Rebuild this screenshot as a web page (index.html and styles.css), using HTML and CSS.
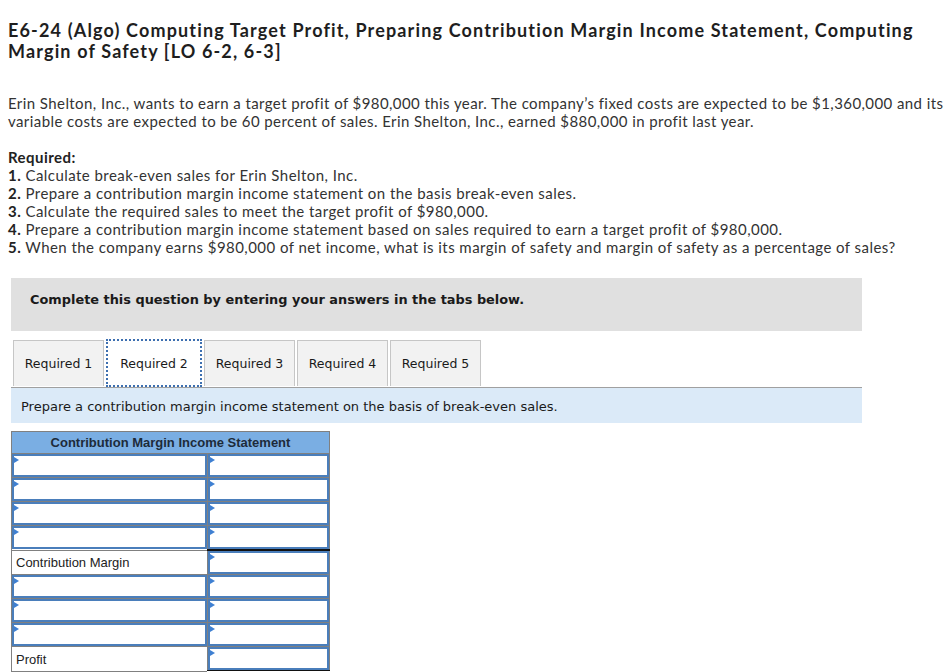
FILE: index.html
```html
<!DOCTYPE html>
<html>
<head>
<meta charset="utf-8">
<link rel="stylesheet" href="styles.css">
</head>
<body>
<div class="page">
  <h1 class="title">E6-24 (Algo) Computing Target Profit, Preparing Contribution Margin Income Statement, Computing Margin of Safety [LO 6-2, 6-3]</h1>
  <p class="intro">Erin Shelton, Inc., wants to earn a target profit of $980,000 this year. The company’s fixed costs are expected to be $1,360,000 and its variable costs are expected to be 60 percent of sales. Erin Shelton, Inc., earned $880,000 in profit last year.</p>
  <div class="req">
    <div class="req-head">Required:</div>
    <div><b>1.</b> Calculate break-even sales for Erin Shelton, Inc.</div>
    <div><b>2.</b> Prepare a contribution margin income statement on the basis break-even sales.</div>
    <div><b>3.</b> Calculate the required sales to meet the target profit of $980,000.</div>
    <div><b>4.</b> Prepare a contribution margin income statement based on sales required to earn a target profit of $980,000.</div>
    <div><b>5.</b> When the company earns $980,000 of net income, what is its margin of safety and margin of safety as a percentage of sales?</div>
  </div>

  <div class="work">
    <div class="banner">Complete this question by entering your answers in the tabs below.</div>
    <div class="tabs">
      <div class="tab">Required 1</div>
      <div class="tab active">Required 2</div>
      <div class="tab">Required 3</div>
      <div class="tab">Required 4</div>
      <div class="tab">Required 5</div>
    </div>
    <div class="instr">Prepare a contribution margin income statement on the basis of break-even sales.</div>

    <table class="cmis">
      <tr><th colspan="2">Contribution Margin Income Statement</th></tr>
      <tr><td class="c1"><div class="inp"></div></td><td class="c2"><div class="inp"></div></td></tr>
      <tr><td class="c1"><div class="inp"></div></td><td class="c2"><div class="inp"></div></td></tr>
      <tr><td class="c1"><div class="inp"></div></td><td class="c2"><div class="inp"></div></td></tr>
      <tr><td class="c1"><div class="inp"></div></td><td class="c2 single"><div class="inp"></div></td></tr>
      <tr><td class="c1 label">Contribution Margin</td><td class="c2"><div class="inp"></div></td></tr>
      <tr><td class="c1"><div class="inp"></div></td><td class="c2"><div class="inp"></div></td></tr>
      <tr><td class="c1"><div class="inp"></div></td><td class="c2"><div class="inp"></div></td></tr>
      <tr><td class="c1"><div class="inp"></div></td><td class="c2"><div class="inp"></div></td></tr>
      <tr><td class="c1 label">Profit</td><td class="c2 double"><div class="inp"></div></td></tr>
    </table>
  </div>
</div>
</body>
</html>
```
FILE: styles.css
```css
html, body {
  margin: 0;
  padding: 0;
  background: #fff;
}
.page {
  padding: 20px 0 0 8px;
  font-family: "Lato", "Liberation Sans", sans-serif;
  color: #333;
}
.title {
  margin: 0;
  font-size: 18px;
  line-height: 21px;
  font-weight: 700;
  letter-spacing: 1.15px;
  color: #1e1e1e;
  width: 935px;
}
.intro {
  margin: 32px 0 0;
  font-size: 15px;
  line-height: 18px;
  letter-spacing: 0.42px;
  width: 942px;
}
.req {
  margin-top: 18px;
  font-size: 15px;
  line-height: 18px;
  letter-spacing: 0.45px;
}
.req b, .req-head {
  font-weight: 700;
  color: #222;
}
.work {
  margin: 22px 0 0 3px;
  font-family: "DejaVu Sans", Verdana, sans-serif;
  color: #1a1a1a;
}
.banner {
  width: 851px;
  height: 53px;
  box-sizing: border-box;
  padding: 14px 19px 0;
  background: #e0e0e0;
  font-size: 12.9px;
  line-height: 16px;
  font-weight: 700;
}
.tabs {
  margin-top: 8px;
  width: 851px;
  display: flex;
  gap: 2px;
  padding-left: 2px;
  box-sizing: border-box;
  border-bottom: 1px solid #a0a0a0;
}
.tab {
  height: 45px;
  width: 89px;
  border: 1px solid #c6c6c6;
  border-bottom: none;
  background: #f2f2f2;
  display: flex;
  align-items: center;
  justify-content: center;
  font-size: 12.5px;
  margin-top: 1px;
}
.tab.active {
  background: #fff;
  border: 2px dotted #3d6fb0;
  height: 44px;
  width: 92px;
  margin-top: 0;
}
.instr {
  width: 851px;
  height: 35px;
  box-sizing: border-box;
  padding: 11px 10px 0;
  background: #dbeaf8;
  font-size: 13px;
  line-height: 16px;
}
.cmis {
  margin-top: 8px;
  border-collapse: collapse;
  width: 319px;
  font-family: "Liberation Sans", Arial, sans-serif;
}
.cmis th {
  height: 21px;
  padding: 0;
  background: #7aaee3;
  border: 1px solid #808080;
  font-size: 13px;
  font-weight: 700;
  color: #1d2b3a;
  text-align: center;
}
.cmis td {
  border: 1px solid #808080;
  padding: 0;
  height: 23px;
}
.cmis .c1 { width: 194px; }
.cmis .c2 { width: 123px; }
.cmis .label {
  font-size: 13px;
  color: #222;
  padding-left: 4px;
}
.cmis .single { border-bottom: 2px solid #111; }
.cmis .double { border-bottom: 3px double #111; }
.inp {
  position: relative;
  height: 19px;
  border: 2px solid #4a7ebb;
  background: #fff;
}
.inp::before {
  content: "";
  position: absolute;
  left: 0;
  top: 1px;
  border-left: 5px solid #3f80d2;
  border-top: 3px solid transparent;
  border-bottom: 3px solid transparent;
}
```
